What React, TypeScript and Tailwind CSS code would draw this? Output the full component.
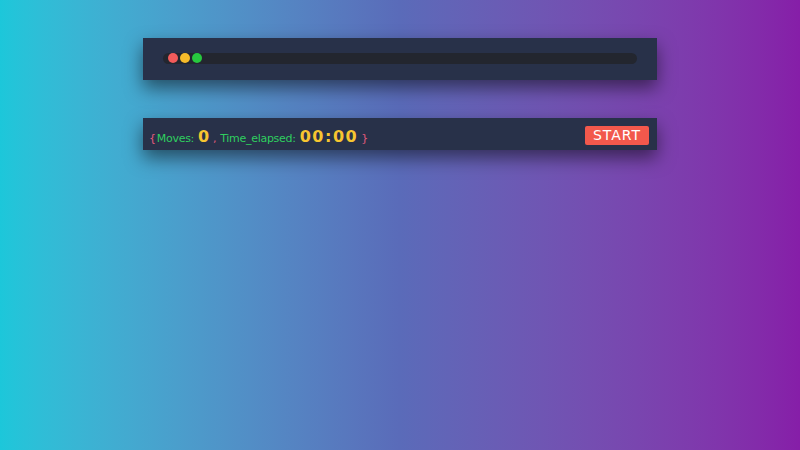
import React from "react";

const Dot = ({ color }: { color: string }) => (
  <span className={`block h-[10px] w-[10px] rounded-full ${color}`} />
);

export default function App() {
  return (
    <div
      className="min-h-[450px] w-full bg-gradient-to-r from-[#1cc7da] via-[#5a6bb9] to-[#861ea8] pt-[38px]"
      style={{ fontFamily: '"DejaVu Sans", sans-serif' }}
    >
      <div className="mx-auto flex w-[514px] flex-col gap-[38px]">
        <div className="flex h-[42px] items-center bg-[#283149] px-[20px] pb-[2px] shadow-[0_8px_18px_rgba(0,0,0,0.5)]">
          <div className="flex h-[11px] w-full items-center gap-[2px] rounded-full bg-[#23262f] pl-[5px]">
            <Dot color="bg-[#f25b5b]" />
            <Dot color="bg-[#f6bb2a]" />
            <Dot color="bg-[#27c93f]" />
          </div>
        </div>

        <div className="flex h-[32px] items-center justify-between bg-[#283149] pl-[6px] pr-[8px] shadow-[0_8px_18px_rgba(0,0,0,0.5)]">
          <div className="flex items-baseline pt-[5px] text-[11px] tracking-tight">
            <span className="text-[#e25a7c]">{"{"}</span>
            <span className="ml-[1px] text-[#2fcf5f]">Moves:</span>
            <span className="ml-[4px] text-[16px] font-bold text-[#f7c530]">0</span>
            <span className="ml-[4px] text-[#e25a7c]">,</span>
            <span className="ml-[4px] text-[#2fcf5f]">Time_elapsed:</span>
            <span className="ml-[4px] text-[16px] font-bold tracking-[1.5px] text-[#f7c530]">00:00</span>
            <span className="ml-[3px] text-[#e25a7c]">{"}"}</span>
          </div>
          <button className="mt-[2px] flex h-[19px] w-[64px] items-center justify-center rounded-[2px] bg-[#f2584c] text-[14px] tracking-[1px] text-white">
            START
          </button>
        </div>
      </div>
    </div>
  );
}
